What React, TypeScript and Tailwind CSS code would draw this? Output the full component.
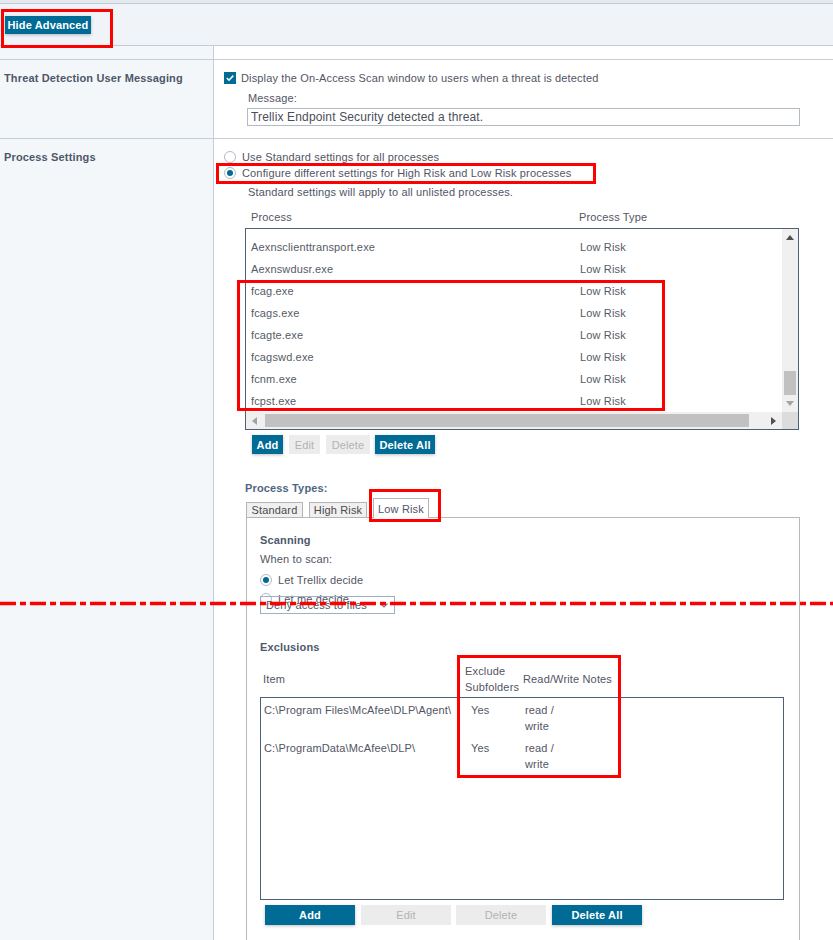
import React from "react";

// ─── Small controls ───────────────────────────────────────────────────────────

function Radio({ checked }: { checked?: boolean }) {
    return (
        <span className="flex h-[12px] w-[12px] shrink-0 items-center justify-center rounded-full border border-[#b3bac3] bg-white">
            {checked && <span className="h-[6px] w-[6px] rounded-full bg-[#006b94]" />}
        </span>
    );
}

function Checkbox() {
    return (
        <span className="flex h-[12px] w-[12px] shrink-0 items-center justify-center bg-[#006b94]">
            <svg width="10" height="10" viewBox="0 0 10 10">
                <polyline points="1.8,5 4,7.2 8.3,2.6" fill="none" stroke="white" strokeWidth="1.6" />
            </svg>
        </span>
    );
}

interface BtnProps {
    label: string;
    disabled?: boolean;
    className?: string;
}

function Btn({ label, disabled, className = "" }: BtnProps) {
    return (
        <div
            className={`flex shrink-0 items-center justify-center text-[11px] ${disabled
                ? "bg-[#ececec] text-[#b3b3b3]"
                : "bg-[#006b94] font-bold text-white shadow-[0_1px_3px_rgba(0,0,0,0.25)]"
                } ${className}`}
        >
            {label}
        </div>
    );
}

function Arrow({ dir, dark }: { dir: "up" | "down" | "left" | "right"; dark?: boolean }) {
    const pts = {
        up: "0,5 4,0 8,5",
        down: "0,0 4,5 8,0",
        left: "5,0 0,4 5,8",
        right: "0,0 5,4 0,8",
    }[dir];
    const vertical = dir === "up" || dir === "down";
    return (
        <svg width={vertical ? 8 : 5} height={vertical ? 5 : 8} viewBox={vertical ? "0 0 8 5" : "0 0 5 8"}>
            <polygon points={pts} fill={dark ? "#505050" : "#a3a3a3"} />
        </svg>
    );
}

function RedBox({ className }: { className: string }) {
    return <div className={`pointer-events-none absolute border-[3px] border-[#ff0000] ${className}`} />;
}

// ─── Data ─────────────────────────────────────────────────────────────────────

const processes = [
    "Aexnsclienttransport.exe",
    "Aexnswdusr.exe",
    "fcag.exe",
    "fcags.exe",
    "fcagte.exe",
    "fcagswd.exe",
    "fcnm.exe",
    "fcpst.exe",
];

const exclusions = [
    { item: "C:\\Program Files\\McAfee\\DLP\\Agent\\", sub: "Yes", notes: "read / write" },
    { item: "C:\\ProgramData\\McAfee\\DLP\\", sub: "Yes", notes: "read / write" },
];

// ─── Page ─────────────────────────────────────────────────────────────────────

export default function App() {
    return (
        <div className="relative h-[940px] w-[833px] overflow-hidden bg-white font-['Liberation_Sans',Arial,sans-serif] text-[11px] leading-[14px] tracking-[0.15px] text-[#525564]">
            <div className="h-[3px] bg-[#e4e9ee]" />
            <div className="h-[43px] border-y border-[#c3ccd6] bg-[#f0f4f8] pl-[5px] pt-[12px]">
                <Btn label="Hide Advanced" className="h-[18px] w-[86px]" />
            </div>

            <div className="grid grid-cols-[214px_1fr]">
                {/* spacer row */}
                <div className="h-[14px] border-b border-r border-[#c5cdd6] bg-[#f4f7fa]" />
                <div className="h-[14px] border-b border-[#c5cdd6]" />

                {/* Threat detection */}
                <div className="h-[79px] border-b border-r border-[#c5cdd6] bg-[#f4f7fa] pl-[4px] pt-[11px] font-bold text-[#4d5768]">
                    Threat Detection User Messaging
                </div>
                <div className="h-[79px] border-b border-[#c5cdd6] pl-[10px] pt-[11px]">
                    <div className="flex items-center gap-[5px]">
                        <Checkbox />
                        <span>Display the On-Access Scan window to users when a threat is detected</span>
                    </div>
                    <div className="mt-[6px] pl-[24px]">Message:</div>
                    <div className="ml-[23px] mt-[3px] flex h-[18px] w-[553px] items-center border border-[#b3bbc2] pl-[3px] text-[12px] text-[#4a4e58]">
                        Trellix Endpoint Security detected a threat.
                    </div>
                </div>

                {/* Process settings */}
                <div className="border-r border-[#c5cdd6] bg-[#f4f7fa] pl-[4px] pt-[11px] font-bold text-[#4d5768]">
                    Process Settings
                </div>
                <div className="pt-[11px]">
                    <div className="flex items-center gap-[6px] pl-[10px]">
                        <Radio />
                        <span>Use Standard settings for all processes</span>
                    </div>
                    <div className="mt-[2px] flex items-center gap-[6px] pl-[10px]">
                        <Radio checked />
                        <span>Configure different settings for High Risk and Low Risk processes</span>
                    </div>
                    <div className="mt-[5px] pl-[34px]">Standard settings will apply to all unlisted processes.</div>

                    <div className="ml-[37px] mt-[11px] flex">
                        <span className="w-[328px]">Process</span>
                        <span>Process Type</span>
                    </div>

                    <div className="ml-[31px] mt-[4px] flex h-[202px] w-[554px] flex-col border border-[#4a6177]">
                        <div className="flex h-[183px]">
                            <div className="flex-1 overflow-hidden pt-[7px] text-[#555b66]">
                                {processes.map((p) => (
                                    <div key={p} className="flex h-[22px] items-center">
                                        <span className="w-[334px] pl-[5px]">{p}</span>
                                        <span>Low Risk</span>
                                    </div>
                                ))}
                            </div>
                            <div className="flex w-[16px] flex-col bg-[#f0f0f0]">
                                <div className="flex h-[17px] items-center justify-center">
                                    <Arrow dir="up" dark />
                                </div>
                                <div className="flex-1" />
                                <div className="mx-[2px] h-[24px] bg-[#c1c1c1]" />
                                <div className="flex h-[17px] items-center justify-center">
                                    <Arrow dir="down" />
                                </div>
                            </div>
                        </div>
                        <div className="flex h-[17px]">
                            <div className="flex flex-1 items-center bg-[#f0f0f0]">
                                <div className="flex w-[17px] justify-center">
                                    <Arrow dir="left" />
                                </div>
                                <div className="ml-[2px] h-[13px] w-[484px] bg-[#c1c1c1]" />
                                <div className="flex-1" />
                                <div className="flex w-[17px] justify-center">
                                    <Arrow dir="right" dark />
                                </div>
                            </div>
                            <div className="w-[16px] bg-[#dcdcdc]" />
                        </div>
                    </div>

                    <div className="ml-[38px] mt-[5px] flex">
                        <Btn label="Add" className="h-[19px] w-[31px]" />
                        <Btn label="Edit" disabled className="ml-[6px] h-[19px] w-[31px]" />
                        <Btn label="Delete" disabled className="ml-[6px] h-[19px] w-[44px]" />
                        <Btn label="Delete All" className="ml-[5px] h-[19px] w-[60px]" />
                    </div>

                    <div className="ml-[31px] mt-[27px] font-bold text-[#4e6681]">Process Types:</div>

                    {/* Tabs */}
                    <div className="relative z-10 -mb-px ml-[32px] mt-[3px] flex h-[20px] items-end gap-[6px]">
                        <div className="flex h-[16px] w-[57px] items-center justify-center border border-[#b5b5b5] bg-[#f0f0f0] text-[#4a4a4a]">
                            Standard
                        </div>
                        <div className="flex h-[16px] w-[58px] items-center justify-center border border-[#b5b5b5] bg-[#f0f0f0] text-[#4a4a4a]">
                            High Risk
                        </div>
                        <div className="flex h-[20px] w-[56px] items-center justify-center border border-b-0 border-[#b5b5b5] bg-white text-[#55536a]">
                            Low Risk
                        </div>
                    </div>

                    <div className="ml-[32px] h-[460px] w-[554px] border border-[#b8b8b8] pl-[13px] pt-[15px]">
                        <div className="font-bold text-[#4e5a6c]">Scanning</div>
                        <div className="mt-[5px]">When to scan:</div>
                        <div className="mt-[7px] flex items-center gap-[6px]">
                            <Radio checked />
                            <span>Let Trellix decide</span>
                        </div>
                        <div className="mt-[5px] flex items-center gap-[6px]">
                            <Radio />
                            <span>Let me decide</span>
                        </div>
                        <div className="relative -mt-[10px] flex h-[18px] w-[135px] items-center justify-between border border-[#9fb0c4] pl-[5px] pr-[6px]">
                            <span>Deny access to files</span>
                            <svg width="8" height="5" viewBox="0 0 8 5">
                                <polyline points="0.5,0.5 4,4 7.5,0.5" fill="none" stroke="#6a7c90" strokeWidth="1.2" />
                            </svg>
                        </div>

                        <div className="mt-[26px] font-bold text-[#4e5a6c]">Exclusions</div>

                        <div className="mt-[9px] flex h-[32px] items-center">
                            <span className="w-[205px] pl-[3px]">Item</span>
                            <span className="w-[58px] leading-[16px]">
                                Exclude
                                <br />
                                Subfolders
                            </span>
                            <span>Read/Write Notes</span>
                        </div>

                        <div className="mt-[2px] h-[203px] w-[524px] border border-[#4a6177]">
                            {exclusions.map((e) => (
                                <div key={e.item} className="flex pb-[2px] pt-[4px] leading-[16px]">
                                    <span className="w-[210px] pl-[3px]">{e.item}</span>
                                    <span className="w-[54px]">{e.sub}</span>
                                    <span className="w-[40px]">{e.notes}</span>
                                </div>
                            ))}
                        </div>

                        <div className="ml-[5px] mt-[5px] flex">
                            <Btn label="Add" className="h-[20px] w-[90px]" />
                            <Btn label="Edit" disabled className="ml-[6px] h-[20px] w-[90px]" />
                            <Btn label="Delete" disabled className="ml-[5px] h-[20px] w-[90px]" />
                            <Btn label="Delete All" className="ml-[6px] h-[20px] w-[90px]" />
                        </div>
                    </div>
                </div>
            </div>

            {/* Annotations */}
            <RedBox className="left-[1px] top-[9px] h-[39px] w-[112px]" />
            <RedBox className="left-[216px] top-[163px] h-[21px] w-[380px]" />
            <RedBox className="left-[237px] top-[280px] h-[131px] w-[428px]" />
            <RedBox className="left-[369px] top-[489px] h-[33px] w-[72px]" />
            <RedBox className="left-[457px] top-[655px] h-[123px] w-[164px]" />
            <svg className="pointer-events-none absolute left-0 top-[601px]" width="833" height="5">
                <line x1="0" y1="2.5" x2="833" y2="2.5" stroke="#ff0000" strokeWidth="3.5" strokeDasharray="16 4 6 4" />
            </svg>
        </div>
    );
}
